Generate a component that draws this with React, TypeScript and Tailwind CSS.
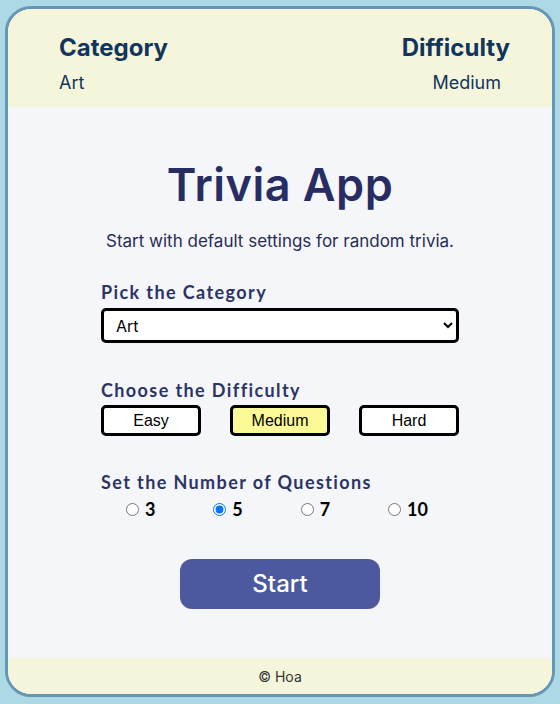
import React, { useState } from "react";

const CATEGORIES = ["Art", "History", "Science", "Sports", "Geography"];
const LEVELS = ["Easy", "Medium", "Hard"];
const COUNTS = [3, 5, 7, 10];

export default function App() {
  const [category, setCategory] = useState("Art");
  const [level, setLevel] = useState("Medium");
  const [count, setCount] = useState(5);

  return (
    <div className="min-h-[704px] bg-[#add8e6] px-[5px] pt-[6px] pb-[7px]">
      <div className="flex h-[691px] flex-col overflow-hidden rounded-[26px] border-[3px] border-[#6497b1] bg-[#f5f6fa]">
        {/* summary of the current choice */}
        <header className="flex h-[98px] justify-between bg-[#f5f5dc] pl-[51px] pr-[42px] pt-[24px] text-[#12355b] [font-family:Inter,'Noto_Sans',sans-serif]">
          <div className="flex flex-col">
            <span className="text-[24px] font-bold leading-[30px]">Category</span>
            <span className="mt-[9px] text-[18px] leading-[22px]">{category}</span>
          </div>
          <div className="flex flex-col items-end">
            <span className="text-[24px] font-bold leading-[30px]">Difficulty</span>
            <span className="mr-[9px] mt-[9px] text-[18px] leading-[22px]">{level}</span>
          </div>
        </header>

        <main className="flex flex-1 flex-col items-center pt-[51px]">
          <h1 className="text-[45px] font-semibold leading-[54px] tracking-[0.5px] text-[#272d63] [font-family:Inter,sans-serif]">
            Trivia App
          </h1>
          <p className="mt-[18px] text-[17px] leading-[22px] text-[#272d55] [font-family:Inter,sans-serif]">
            Start with default settings for random trivia.
          </p>

          <div className="mt-[28px] flex w-[358px] flex-col">
            <label className="text-[18px] font-bold leading-[24px] tracking-[1.4px] text-[#2b3466] [font-family:Lato,sans-serif]">
              Pick the Category
            </label>
            <select
              value={category}
              onChange={(e) => setCategory(e.target.value)}
              className="mt-[4px] h-[35px] w-full rounded-[5px] border-[3px] border-black bg-white pl-[8px] pr-[6px] text-[16px] text-black [font-family:Inter,sans-serif]"
            >
              {CATEGORIES.map((c) => (
                <option key={c} value={c}>
                  {c}
                </option>
              ))}
            </select>

            <label className="mt-[35px] text-[18px] font-bold leading-[24px] tracking-[1.4px] text-[#2b3466] [font-family:Lato,sans-serif]">
              Choose the Difficulty
            </label>
            <div className="mt-[3px] flex justify-between">
              {LEVELS.map((l) => (
                <button
                  key={l}
                  onClick={() => setLevel(l)}
                  className={`h-[31px] w-[100px] rounded-[5px] border-[3px] border-black text-[16px] leading-none text-black [font-family:'Liberation_Sans',Arial,sans-serif] ${
                    level === l ? "bg-[#fbfa96]" : "bg-white"
                  }`}
                >
                  {l}
                </button>
              ))}
            </div>

            <label className="mt-[34px] text-[18px] font-bold leading-[24px] tracking-[1.4px] text-[#2b3466] [font-family:Lato,sans-serif]">
              Set the Number of Questions
            </label>
            <div className="mt-[4px] flex justify-between pl-[25px] pr-[31px]">
              {COUNTS.map((n) => (
                <label key={n} className="flex items-center gap-[6px] text-[18px] font-bold leading-[22px] text-black [font-family:Lato,sans-serif]">
                  <input
                    type="radio"
                    name="count"
                    checked={count === n}
                    onChange={() => setCount(n)}
                    className="m-0 h-[13px] w-[13px]"
                  />
                  {n}
                </label>
              ))}
            </div>
          </div>

          <button className="mt-[39px] h-[50px] w-[200px] rounded-[12px] bg-[#4d599e] text-[24px] font-medium text-white [font-family:Inter,sans-serif]">
            Start
          </button>
        </main>

        <footer className="flex h-[36px] items-center justify-center bg-[#f5f5dc] text-[14px] text-[#333] [font-family:Inter,sans-serif]">
          © Hoa
        </footer>
      </div>
    </div>
  );
}
